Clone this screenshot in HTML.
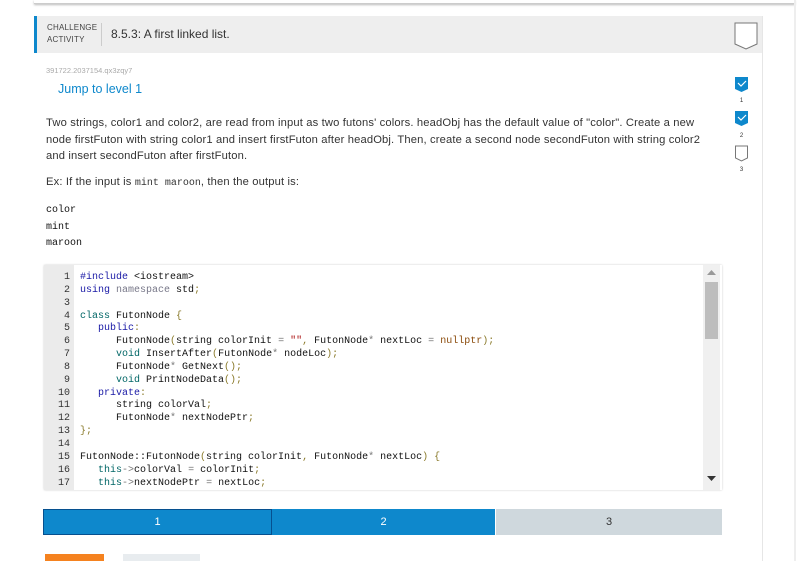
<!DOCTYPE html>
<html><head><meta charset="utf-8"><style>
body{margin:0;width:797px;height:561px;overflow:hidden;background:#fff;font-family:"Liberation Sans",sans-serif;position:relative}
.topbar{position:absolute;left:34px;top:0;width:761px;height:3px;border-bottom:1px solid #ccc;box-shadow:0 1px 2px #bbb}
.vline{position:absolute;left:794px;top:0;width:2px;height:561px;background:#eee}
.card{position:absolute;left:34px;top:16px;width:728px;height:545px;border-right:1px solid #e6e6e6;background:#fff}
.hdr{position:absolute;left:0;top:0;width:725px;height:37px;background:#eeeeee;border-left:3px solid #0e88cc}
.ca{position:absolute;left:10px;top:6px;font-size:8px;line-height:12px;color:#444;letter-spacing:.2px}
.sep{position:absolute;left:64px;top:7px;width:1px;height:23px;background:#ccc}
.title{position:absolute;left:74px;top:11px;font-size:12px;color:#333}
.small{position:absolute;left:46px;top:66px;font-size:7.5px;color:#aaa}
.jump{position:absolute;left:58px;top:82px;font-size:12.5px;color:#0e88cc}
.p{position:absolute;left:46px;font-size:11.2px;color:#333;line-height:16.7px;letter-spacing:.15px}
.m{font-family:"Liberation Mono",monospace;font-size:10px;letter-spacing:0}
.out{position:absolute;left:46px;top:203px;font-family:"Liberation Mono",monospace;font-size:10px;line-height:16.7px;color:#111}
.ed{position:absolute;left:44px;top:265px;width:678px;height:225px;background:#fff;box-shadow:0 0 2px #ccc;overflow:hidden}
.gut{position:absolute;left:0;top:0;width:30px;height:225px;background:#ebebeb}
.code{position:absolute;left:0;top:7px;font-family:"Liberation Mono",monospace;font-size:10px;line-height:12.85px;white-space:pre;color:#111}
.ln{display:inline-block;width:26px;text-align:right;color:#333;margin-right:10px}
.kw{color:#1a1aa6}.ty{color:#066}.ns{color:#778}.pu{color:#8a7a2a}.st{color:#a11}.nu{color:#8a4a0a}.op{color:#777}
.sb{position:absolute;left:659px;top:0;width:17px;height:225px;background:#f0f0f0}
.thumb{position:absolute;left:2px;top:17px;width:13px;height:57px;background:#bdbdbd}
.steps{position:absolute;top:509px;height:26px;font-size:11px;text-align:center;line-height:26px}
</style></head><body>
<div class="topbar"></div><div class="vline"></div>
<div class="card">
 <div class="hdr"><div class="ca">CHALLENGE<br>ACTIVITY</div><div class="sep"></div><div class="title">8.5.3: A first linked list.</div>
 <svg style="position:absolute;left:697px;top:6px" width="24" height="28"><path d="M1 1H23V22L12 27L1 22Z" fill="#fff" stroke="#777" stroke-width="1"/></svg></div>
</div>
<svg style="position:absolute;left:734px;top:76px" width="16" height="100">
<path d="M1 1H14V13L7.5 16L1 13Z" fill="#0e88cc"/><path d="M4 7L7 10L12 5" stroke="#fff" fill="none" stroke-width="1.2"/>
<text x="7.5" y="26" font-size="6" text-anchor="middle" fill="#333" font-family="Liberation Sans">1</text>
<path d="M1 35H14V47L7.5 50L1 47Z" fill="#0e88cc"/><path d="M4 41L7 44L12 39" stroke="#fff" fill="none" stroke-width="1.2"/>
<text x="7.5" y="61" font-size="6" text-anchor="middle" fill="#333" font-family="Liberation Sans">2</text>
<path d="M1.5 70H13.5V82L7.5 85L1.5 82Z" fill="#fff" stroke="#777"/>
<text x="7.5" y="95" font-size="6" text-anchor="middle" fill="#333" font-family="Liberation Sans">3</text>
</svg>
<div class="small">391722.2037154.qx3zqy7</div>
<div class="jump">Jump to level 1</div>
<div class="p" style="top:115px;width:675px">Two strings, color1 and color2, are read from input as two futons' colors. headObj has the default value of "color". Create a new node firstFuton with string color1 and insert firstFuton after headObj. Then, create a second node secondFuton with string color2 and insert secondFuton after firstFuton.</div>
<div class="p" style="top:174px">Ex: If the input is <span class="m">mint maroon</span>, then the output is:</div>
<div class="out">color<br>mint<br>maroon</div>
<div class="ed"><div class="gut"></div><div class="code"><span class="ln">1</span><span class="kw">#include</span> &lt;iostream&gt;
<span class="ln">2</span><span class="kw">using</span> <span class="ns">namespace</span> std<span class="pu">;</span>
<span class="ln">3</span>
<span class="ln">4</span><span class="ty">class</span> FutonNode <span class="pu">{</span>
<span class="ln">5</span>   <span class="kw">public</span><span class="pu">:</span>
<span class="ln">6</span>      FutonNode<span class="pu">(</span>string colorInit <span class="op">=</span> <span class="st">""</span><span class="pu">,</span> FutonNode<span class="op">*</span> nextLoc <span class="op">=</span> <span class="nu">nullptr</span><span class="pu">);</span>
<span class="ln">7</span>      <span class="ty">void</span> InsertAfter<span class="pu">(</span>FutonNode<span class="op">*</span> nodeLoc<span class="pu">);</span>
<span class="ln">8</span>      FutonNode<span class="op">*</span> GetNext<span class="pu">();</span>
<span class="ln">9</span>      <span class="ty">void</span> PrintNodeData<span class="pu">();</span>
<span class="ln">10</span>   <span class="kw">private</span><span class="pu">:</span>
<span class="ln">11</span>      string colorVal<span class="pu">;</span>
<span class="ln">12</span>      FutonNode<span class="op">*</span> nextNodePtr<span class="pu">;</span>
<span class="ln">13</span><span class="pu">};</span>
<span class="ln">14</span>
<span class="ln">15</span>FutonNode::FutonNode<span class="pu">(</span>string colorInit<span class="pu">,</span> FutonNode<span class="op">*</span> nextLoc<span class="pu">)</span> <span class="pu">{</span>
<span class="ln">16</span>   <span class="ty">this</span><span class="op">-&gt;</span>colorVal <span class="op">=</span> colorInit<span class="pu">;</span>
<span class="ln">17</span>   <span class="ty">this</span><span class="op">-&gt;</span>nextNodePtr <span class="op">=</span> nextLoc<span class="pu">;</span></div>
<div class="sb"><svg style="position:absolute;left:4px;top:5px" width="9" height="6"><path d="M0 5L4.5 0L9 5Z" fill="#999"/></svg><div class="thumb"></div><svg style="position:absolute;left:4px;top:211px" width="9" height="6"><path d="M0 0L4.5 5L9 0Z" fill="#333"/></svg></div></div>
<div class="steps" style="left:43px;width:227px;height:24px;line-height:24px;background:#0e88cc;border:1px solid #06508f;color:#fff">1</div>
<div class="steps" style="left:272px;width:223px;background:#0e88cc;color:#fff">2</div>
<div class="steps" style="left:496px;width:226px;background:#cfd8dd;color:#333">3</div>
<div style="position:absolute;left:45px;top:554px;width:59px;height:7px;background:#f5821f"></div>
<div style="position:absolute;left:123px;top:554px;width:77px;height:7px;background:#e8ecef"></div>
</body></html>
